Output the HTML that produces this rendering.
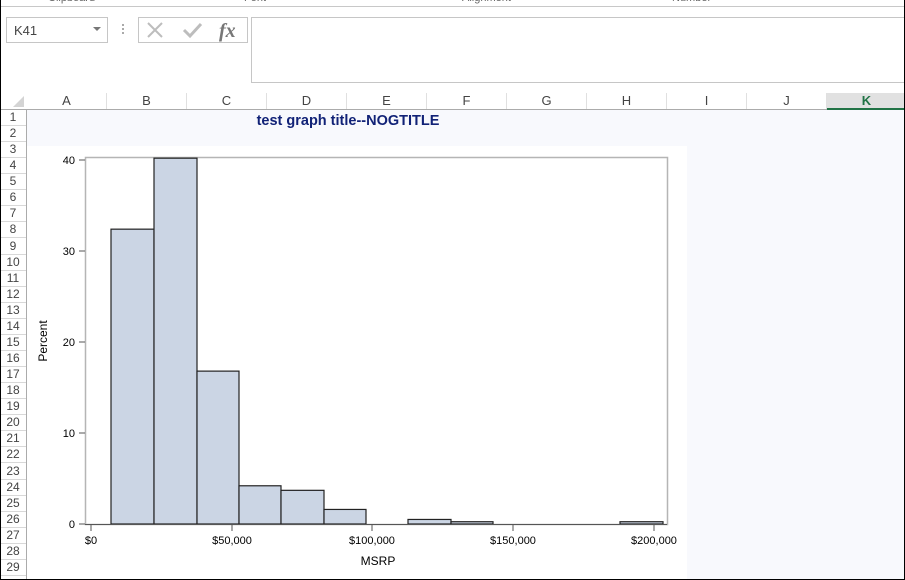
<!DOCTYPE html>
<html><head><meta charset="utf-8">
<style>
*{margin:0;padding:0;box-sizing:border-box}
body{width:905px;height:580px;overflow:hidden;background:#fff;font-family:"Liberation Sans",sans-serif;position:relative}
.frame{position:absolute;left:0;top:0;width:905px;height:580px;border:1px solid #000;border-top:none;pointer-events:none;z-index:10}
.abs{position:absolute}
</style></head><body>
<div class="abs" style="left:0;top:0;width:905px;height:7px;border-bottom:1px solid #c8c8c8;overflow:hidden">
<span class="abs" style="left:48px;top:-8px;font-size:11px;color:#666">Clipboard</span>
<span class="abs" style="left:244px;top:-8px;font-size:11px;color:#666">Font</span>
<span class="abs" style="left:462px;top:-8px;font-size:11px;color:#666">Alignment</span>
<span class="abs" style="left:672px;top:-8px;font-size:11px;color:#666">Number</span>
</div>
<!-- name box -->
<div class="abs" style="left:6px;top:17px;width:102px;height:26px;border:1px solid #c6c6c6;font-size:13px;color:#444;padding:5px 0 0 7px">K41</div>
<div class="abs" style="left:93px;top:27px;width:0;height:0;border-left:4px solid transparent;border-right:4px solid transparent;border-top:4px solid #777"></div>
<div class="abs" style="left:122px;top:24px;width:2px;height:12px;background:repeating-linear-gradient(#aaa 0 2px,transparent 2px 4px)"></div>
<div class="abs" style="left:138px;top:17px;width:110px;height:26px;border:1px solid #c6c6c6"></div>
<svg class="abs" style="left:138px;top:17px" width="110" height="26">
<path d="M10 6 L24 20 M24 6 L10 20" stroke="#bdbdbd" stroke-width="2" fill="none"/>
<path d="M46 13 L52 19 L63 7" stroke="#bdbdbd" stroke-width="3" fill="none"/>
<text x="81" y="20" font-family="Liberation Serif" font-style="italic" font-weight="bold" font-size="20" fill="#777">fx</text>
</svg>
<div class="abs" style="left:251px;top:17px;width:660px;height:66px;border:1px solid #c6c6c6;border-right:none"></div>
<!-- column headers -->
<div class="abs" style="left:0;top:93px;width:905px;height:17px;background:#fff;border-bottom:1px solid #ababab"></div>
<svg class="abs" style="left:13px;top:96px" width="12" height="12"><path d="M11 0 L11 11 L0 11Z" fill="#d4d4d4"/></svg>
<div id="cols"></div>
<div class="abs" style="left:827px;top:93px;width:78px;height:17px;background:#e1e1e1;border-bottom:2px solid #217346"></div>
<!-- row headers -->
<div class="abs" style="left:0;top:110px;width:27px;height:470px;border-right:1px solid #ababab"></div>
<div id="rows"></div>
<!-- cells bg -->
<div class="abs" style="left:27px;top:110px;width:878px;height:470px;background:#f8f9fd"></div>
<div class="abs" style="left:27px;top:146px;width:660px;height:434px;background:#fff"></div>
<div class="abs" style="left:33px;top:113px;width:630px;text-align:center;font-weight:bold;font-size:14.5px;color:#112277">test graph title--NOGTITLE</div>
<svg class="abs" style="left:0;top:0" width="905" height="580" font-family="Liberation Sans" font-size="11">
<rect x="85.5" y="157.5" width="582" height="367" fill="#fff" stroke="#b5b5b5" stroke-width="1.5"/>
<g fill="#cbd5e4" stroke="#222" stroke-width="1.2" id="bars"></g>
<g id="ax" stroke="#555" fill="none"></g>
<g fill="#000" id="labs"></g>
<text x="378" y="565" font-size="12" text-anchor="middle">MSRP</text>
<text transform="translate(47,341) rotate(-90)" font-size="12" text-anchor="middle">Percent</text>
</svg>
<div class="frame"></div>
<script>
var c="ABCDEFGHIJK",h="";
for(var i=0;i<11;i++){var x=27+i*80;h+='<div class="abs" style="left:'+x+'px;top:93px;width:80px;height:16px;text-align:center;font-size:13px;color:'+(i==10?'#217346;font-weight:bold':'#444')+';padding-top:0px;border-right:1px solid #e0e0e0;z-index:2">'+c[i]+'</div>';}
document.getElementById('cols').innerHTML=h;h="";
for(var r=1;r<=29;r++){var y=110+(r-1)*16.07;h+='<div class="abs" style="left:0;top:'+y+'px;width:26px;height:16px;text-align:center;font-size:12px;color:#444;border-bottom:1px solid #d8d8d8;line-height:15px">'+r+'</div>';}
document.getElementById('rows').innerHTML=h;
function Y(v){return 524-v*9.1}
var b=[[111,154,32.4],[154,197,40.2],[197,239,16.8],[239,281,4.2],[281,324,3.7],[324,366,1.6],[408,451,0.5],[451,493,0.25],[620,663,0.25]],s="";
b.forEach(function(q){s+='<rect x="'+q[0]+'" y="'+Y(q[2])+'" width="'+(q[1]-q[0])+'" height="'+(524-Y(q[2]))+'"/>'});
document.getElementById('bars').innerHTML=s;
s='<path d="M85 524.5 H667"/>';var l="";
[0,10,20,30,40].forEach(function(v){var y=Y(v);s+='<path d="M79 '+y+' H85"/>';l+='<text x="75" y="'+(y+4)+'" text-anchor="end">'+v+'</text>'});
[[91,"$0"],[232,"$50,000"],[372,"$100,000"],[513,"$150,000"],[654,"$200,000"]].forEach(function(t){s+='<path d="M'+t[0]+' 525 V531"/>';l+='<text x="'+t[0]+'" y="544" text-anchor="middle">'+t[1]+'</text>'});
document.getElementById('ax').innerHTML=s;document.getElementById('labs').innerHTML=l;
</script>
</body></html>
